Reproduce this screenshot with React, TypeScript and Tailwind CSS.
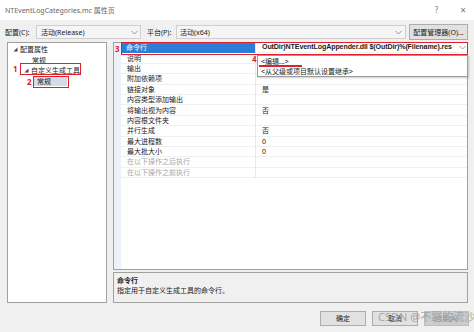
import React from "react";

const rows: { n: string; v: string; dim?: boolean }[] = [
  { n: "命令行", v: "" },
  { n: "说明", v: "" },
  { n: "输出", v: "" },
  { n: "附加依赖项", v: "" },
  { n: "链接对象", v: "是" },
  { n: "内容类型添加输出", v: "" },
  { n: "将输出视为内容", v: "否" },
  { n: "内容根文件夹", v: "" },
  { n: "并行生成", v: "否" },
  { n: "最大进程数", v: "0" },
  { n: "最大批大小", v: "0" },
  { n: "在以下操作之后执行", v: "", dim: true },
  { n: "在以下操作之前执行", v: "", dim: true },
];

function Chevron() {
  return (
    <svg width="7" height="5" viewBox="0 0 7 5" className="shrink-0">
      <path d="M0.5 1 L3.5 4 L6.5 1" fill="none" stroke="#8a8a8a" strokeWidth="0.9" />
    </svg>
  );
}

function Tri() {
  return (
    <svg width="5" height="5" viewBox="0 0 5 5" className="shrink-0">
      <path d="M4.5 0.5 L4.5 4.5 L0.5 4.5 Z" fill="#404040" />
    </svg>
  );
}

export default function App() {
  return (
    <div className="relative w-[474px] h-[332px] overflow-hidden bg-[#f0f0f0] text-[7px] leading-none text-[#1a1a1a] font-[Noto_Sans,Noto_Sans_CJK_SC,sans-serif] flex flex-col">
      {/* title bar */}
      <div className="h-[20px] bg-white flex items-center pl-[5px] pr-[8px] shrink-0">
        <span className="text-[7px] text-[#666]">NTEventLogCategories.mc 属性页</span>
        <span className="ml-auto text-[8px] text-[#777] mr-[22px]">?</span>
        <span className="text-[10px] text-[#777]">×</span>
      </div>

      {/* config row */}
      <div className="h-[16px] mt-[4px] flex items-center pl-[5px] pr-[6px] shrink-0">
        <span className="w-[31px] shrink-0">配置(C):</span>
        <div className="w-[105px] shrink-0 h-[14px] bg-[#f5f5f5] border border-[#cfcfcf] flex items-center pl-[4px] pr-[2px]">
          <span>活动(Release)</span>
          <span className="ml-auto"><Chevron /></span>
        </div>
        <span className="ml-[6px] w-[29px] shrink-0">平台(P):</span>
        <div className="w-[230px] shrink-0 h-[14px] bg-[#f5f5f5] border border-[#cfcfcf] flex items-center pl-[3px] pr-[3px]">
          <span>活动(x64)</span>
          <span className="ml-auto"><Chevron /></span>
        </div>
        <div className="ml-[3px] flex-1 h-[16px] bg-[#e1e1e1] border border-[#adadad] flex items-center justify-center whitespace-nowrap">
          配置管理器(O)...
        </div>
      </div>

      {/* main */}
      <div className="mt-[2px] h-[261px] flex pl-[7px] pr-[6px] gap-[6px] shrink-0">
        {/* tree */}
        <div className="relative w-[100px] shrink-0 bg-white border border-[#a0a0a0] pt-[1px]">
          <div className="h-[10.5px] flex items-center pl-[5px] gap-[2px] mt-[0.5px]">
            <Tri />
            <span>配置属性</span>
          </div>
          <div className="h-[10.5px] flex items-center pl-[24px]">常规</div>
          <div className="h-[10.5px] flex items-center pl-[16px] gap-[2px]">
            <Tri />
            <span>自定义生成工具</span>
          </div>
          <div className="h-[10.5px] flex items-center pl-[25px]">
            <span className="bg-[#d6dbe6] h-[10px] w-[34px] flex items-center pl-[4px]">常规</span>
          </div>
          {/* annotations */}
          <div className="absolute left-[12px] top-[20px] w-[61px] h-[12px] border-[1.5px] border-[#e0202a]" />
          <span className="absolute left-[5px] top-[22px] text-[8px] font-bold text-[#e0202a]">1</span>
          <div className="absolute left-[25px] top-[33px] w-[36px] h-[12px] border-[1.5px] border-[#e0202a]" />
          <span className="absolute left-[19px] top-[35px] text-[8px] font-bold text-[#e0202a]">2</span>
        </div>

        {/* right column */}
        <div className="flex-1 min-w-0 flex flex-col gap-[2px]">
          <div className="relative h-[228px] bg-white border border-[#a0a0a0] flex flex-col">
            <div className="flex flex-col">
              {rows.map((r, i) => (
                <div key={i} className="h-[10.4px] flex">
                  <div className="w-[7px] bg-[#eef2f8] shrink-0" />
                  <div
                    className={
                      i === 0
                        ? "w-[134px] shrink-0 bg-[#2b7fd9] text-white flex items-center pl-[5px] border-b border-[#2b7fd9]"
                        : "w-[134px] shrink-0 flex items-center pl-[6px] border-b border-[#f0f0f0] " +
                          (r.dim ? "text-[#a8a8a8]" : "")
                    }
                  >
                    {r.n}
                  </div>
                  <div className="w-px bg-[#e8e8e8] shrink-0" />
                  <div className="flex-1 min-w-0 flex items-center pl-[6px] border-b border-[#f0f0f0]">
                    {i === 0 ? (
                      <div className="flex items-center w-full min-w-0 pr-[1px]">
                        <span className="min-w-0 font-[Liberation_Sans,sans-serif] font-bold text-[7.1px] whitespace-nowrap overflow-hidden tracking-[-0.12px]">
                          OutDir)NTEventLogAppender.dll $(OutDir)%(Filename).res
                        </span>
                        <span className="ml-auto pl-[1px]"><Chevron /></span>
                      </div>
                    ) : (
                      r.v
                    )}
                  </div>
                </div>
              ))}
            </div>
            <div className="flex-1 flex">
              <div className="w-[7px] bg-[#eef2f8]" />
            </div>

            {/* red box 3 */}
            <div className="absolute left-[7px] top-[-1px] right-[-1px] h-[13px] border-[1.5px] border-[#e0202a]" />
            <span className="absolute left-[1px] top-[2px] text-[8px] font-bold text-[#e0202a]">3</span>

            {/* dropdown popup */}
            <div className="absolute left-[143px] top-[12px] right-[-1px] h-[22px] bg-white border border-[#9a9a9a] shadow-[1px_1px_2px_rgba(0,0,0,0.2)] flex flex-col pl-[3px] pt-[1px]">
              <div className="h-[10px] flex items-center">&lt;编辑...&gt;</div>
              <div className="h-[10px] flex items-center">&lt;从父级或项目默认设置继承&gt;</div>
              <div className="absolute left-[1px] top-[9px] w-[43px] h-[1.5px] bg-[#e0202a]" />
            </div>
            <span className="absolute left-[138px] top-[12px] text-[8px] font-bold text-[#e0202a]">4</span>
          </div>

          <div className="h-[31px] bg-[#f0f0f0] border border-[#a0a0a0] pl-[3px] pt-[4px] flex flex-col gap-[3px]">
            <span className="font-bold">命令行</span>
            <span>指定用于自定义生成工具的命令行。</span>
          </div>
        </div>
      </div>

      {/* buttons */}
      <div className="mt-[8px] h-[15px] flex justify-end gap-[6px] pr-[5px] shrink-0">
        <div className="w-[46px] h-[15px] bg-[#e1e1e1] border border-[#adadad] flex items-center justify-center">确定</div>
        <div className="w-[46px] h-[15px] bg-[#e1e1e1] border border-[#adadad] flex items-center justify-center">取消</div>
        <div className="w-[45px] h-[15px] bg-[#cccccc] border border-[#bfbfbf] flex items-center justify-center text-[#8c8c8c]">应用(A)</div>
      </div>

      {/* watermark */}
      <span className="absolute left-[378px] top-[311px] text-[11px] text-[#9a9a9a] opacity-80 whitespace-nowrap">CSDN @不羁的流沙</span>
    </div>
  );
}
